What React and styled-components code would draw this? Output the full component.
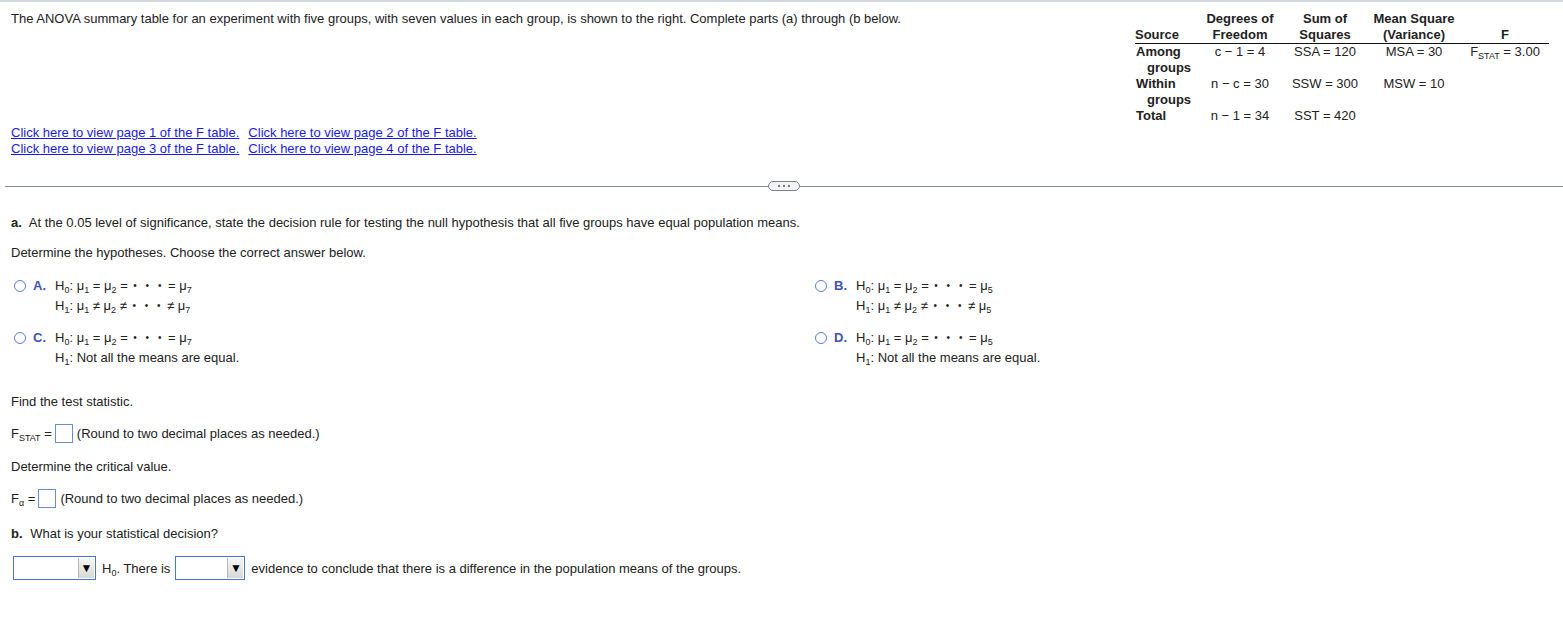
import React from "react";
import styled, { createGlobalStyle } from "styled-components";

const GlobalStyle = createGlobalStyle`
  html, body {
    margin: 0;
    padding: 0;
    background: #fff;
  }
  body {
    font-family: "Liberation Sans", Arial, sans-serif;
    font-size: 13px;
    color: #222;
  }
`;

const Page = styled.div`
  width: 1563px;
  min-height: 619px;
  border-top: 2px solid #d2d7e2;
  box-sizing: border-box;
  padding-top: 9px;
`;

const TopRow = styled.div`
  display: flex;
  justify-content: space-between;
  align-items: flex-start;
  padding: 0 14px 0 11px;
`;

const Intro = styled.div`
  line-height: 16px;
`;

const AnovaTable = styled.table`
  border-collapse: collapse;
  table-layout: fixed;
  width: 414px;
  line-height: 16px;

  th {
    font-weight: bold;
    text-align: center;
    vertical-align: bottom;
    padding: 0;
    border-bottom: 1px solid #111;
  }
  td {
    text-align: center;
    vertical-align: top;
    padding: 0;
    white-space: nowrap;
  }
  th:first-child,
  td:first-child {
    text-align: left;
    white-space: normal;
  }
`;

const RowHead = styled.td`
  font-weight: bold;
  padding-left: 12px !important;
  text-indent: -11px;
`;

const Sub = styled.sub`
  font-size: 9px;
  vertical-align: -3px;
  line-height: 0;
`;

const Links = styled.div`
  display: grid;
  grid-template-columns: auto auto;
  justify-content: start;
  column-gap: 9px;
  padding-left: 11px;
  margin-top: 1px;
  line-height: 16px;
`;

const TableLink = styled.a`
  color: #1a1ae6;
  text-decoration: underline;
  cursor: pointer;
`;

const Divider = styled.div`
  display: flex;
  align-items: center;
  margin: 24px 0 0 5px;
  height: 10px;

  &::before,
  &::after {
    content: "";
    flex: 1;
    height: 1px;
    background: #8a9099;
  }
`;

const MorePill = styled.span`
  width: 30px;
  height: 8px;
  border: 1px solid #7d838c;
  border-radius: 5px;
  background: #f3f4f6;
  display: flex;
  align-items: center;
  justify-content: center;
  gap: 3px;

  i {
    width: 2px;
    height: 2px;
    background: #4a4f57;
    border-radius: 1px;
  }
`;

const Body = styled.div`
  padding-left: 11px;
`;

const Para = styled.p`
  margin: ${(p) => p.$top || 0}px 0 0;
  line-height: 16px;
`;

const Bold = styled.b`
  font-weight: bold;
  margin-right: 4px;
`;

const Options = styled.div`
  display: grid;
  grid-template-columns: 801px 1fr;
  row-gap: 12px;
  margin-top: 15px;
  padding-left: 3px;
`;

const Option = styled.div`
  display: flex;
  align-items: flex-start;
`;

const Radio = styled.span`
  width: 10px;
  height: 10px;
  border: 1px solid #5b7ed3;
  border-radius: 50%;
  margin-top: 4px;
  flex-shrink: 0;
`;

const Letter = styled.span`
  font-weight: bold;
  color: #3f52b4;
  width: 22px;
  margin-left: 7px;
  line-height: 20px;
  height: 20px;
`;

const MathLines = styled.div`
  display: flex;
  flex-direction: column;
`;

const MathLine = styled.div`
  line-height: 20px;
  height: 20px;
  white-space: pre;
`;

const Dots = styled.span`
  font-size: 10px;
  letter-spacing: 3px;
  margin-left: 2px;
  vertical-align: 1px;
`;

const AnswerRow = styled.div`
  display: flex;
  align-items: center;
  margin-top: ${(p) => p.$top}px;
  height: 20px;
`;

const Label = styled.span`
  white-space: pre;
`;

const AnswerBox = styled.span`
  width: 16px;
  height: 17px;
  border: 1px solid #6b8bd6;
  margin: 0 4px 0 3px;
  background: #fff;
`;

const SelectRow = styled.div`
  display: flex;
  align-items: center;
  margin-top: 14px;
  padding-left: 2px;
`;

const Select = styled.span`
  width: ${(p) => p.$width}px;
  height: 22px;
  border: 1px solid #4a74cf;
  display: flex;
  justify-content: flex-end;
  align-items: center;
  padding-right: 1px;
  box-sizing: content-box;
  margin-right: 6px;
`;

const SelectArrow = styled.span`
  width: 15px;
  height: 20px;
  background: linear-gradient(#f6f6f6, #d8d8d8);
  border-left: 1px solid #b8b8b8;
  display: flex;
  align-items: center;
  justify-content: center;
  font-size: 12px;
  color: #000;
`;

const Inline = styled.span`
  margin-right: 5px;
`;

const H = ({ n }) => (
  <>
    H<Sub>{n}</Sub>:{" "}
  </>
);

const Mu = ({ n }) => (
  <>
    μ<Sub>{n}</Sub>
  </>
);

function Hypothesis({ letter, k, alt }) {
  return (
    <Option>
      <Radio />
      <Letter>{letter}.</Letter>
      <MathLines>
        <MathLine>
          <H n="0" />
          <Mu n="1" /> = <Mu n="2" /> = <Dots>• • •</Dots> = <Mu n={k} />
        </MathLine>
        <MathLine>
          <H n="1" />
          {alt ? (
            "Not all the means are equal."
          ) : (
            <>
              <Mu n="1" /> ≠ <Mu n="2" /> ≠ <Dots>• • •</Dots> ≠ <Mu n={k} />
            </>
          )}
        </MathLine>
      </MathLines>
    </Option>
  );
}

export default function App() {
  return (
    <Page>
      <GlobalStyle />
      <TopRow>
        <Intro>
          The ANOVA summary table for an experiment with five groups, with seven
          values in each group, is shown to the right. Complete parts (a)
          through (b below.
        </Intro>
        <AnovaTable>
          <colgroup>
            <col style={{ width: 62 }} />
            <col style={{ width: 86 }} />
            <col style={{ width: 84 }} />
            <col style={{ width: 94 }} />
            <col style={{ width: 88 }} />
          </colgroup>
          <thead>
            <tr>
              <th>Source</th>
              <th>
                Degrees of
                <br />
                Freedom
              </th>
              <th>
                Sum of
                <br />
                Squares
              </th>
              <th>
                Mean Square
                <br />
                (Variance)
              </th>
              <th>F</th>
            </tr>
          </thead>
          <tbody>
            <tr>
              <RowHead>Among groups</RowHead>
              <td>c − 1 = 4</td>
              <td>SSA = 120</td>
              <td>MSA = 30</td>
              <td>
                F<Sub>STAT</Sub> = 3.00
              </td>
            </tr>
            <tr>
              <RowHead>Within groups</RowHead>
              <td>n − c = 30</td>
              <td>SSW = 300</td>
              <td>MSW = 10</td>
              <td />
            </tr>
            <tr>
              <RowHead>Total</RowHead>
              <td>n − 1 = 34</td>
              <td>SST = 420</td>
              <td />
              <td />
            </tr>
          </tbody>
        </AnovaTable>
      </TopRow>

      <Links>
        <TableLink>Click here to view page 1 of the F table.</TableLink>
        <TableLink>Click here to view page 2 of the F table.</TableLink>
        <TableLink>Click here to view page 3 of the F table.</TableLink>
        <TableLink>Click here to view page 4 of the F table.</TableLink>
      </Links>

      <Divider>
        <MorePill>
          <i />
          <i />
          <i />
        </MorePill>
      </Divider>

      <Body>
        <Para $top={24}>
          <Bold>a.</Bold> At the 0.05 level of significance, state the decision
          rule for testing the null hypothesis that all five groups have equal
          population means.
        </Para>
        <Para $top={14}>
          Determine the hypotheses. Choose the correct answer below.
        </Para>

        <Options>
          <Hypothesis letter="A" k="7" />
          <Hypothesis letter="B" k="5" />
          <Hypothesis letter="C" k="7" alt />
          <Hypothesis letter="D" k="5" alt />
        </Options>

        <Para $top={26}>Find the test statistic.</Para>
        <AnswerRow $top={13}>
          <Label>
            F<Sub>STAT</Sub> =
          </Label>
          <AnswerBox />
          (Round to two decimal places as needed.)
        </AnswerRow>
        <Para $top={16}>Determine the critical value.</Para>
        <AnswerRow $top={13}>
          <Label>
            F<Sub>α</Sub> =
          </Label>
          <AnswerBox />
          (Round to two decimal places as needed.)
        </AnswerRow>
        <Para $top={18}>
          <Bold>b.</Bold> What is your statistical decision?
        </Para>

        <SelectRow>
          <Select $width={80}>
            <SelectArrow>▼</SelectArrow>
          </Select>
          <Inline>
            H<Sub>0</Sub>. There is
          </Inline>
          <Select $width={67}>
            <SelectArrow>▼</SelectArrow>
          </Select>
          <span>
            evidence to conclude that there is a difference in the population
            means of the groups.
          </span>
        </SelectRow>
      </Body>
    </Page>
  );
}
